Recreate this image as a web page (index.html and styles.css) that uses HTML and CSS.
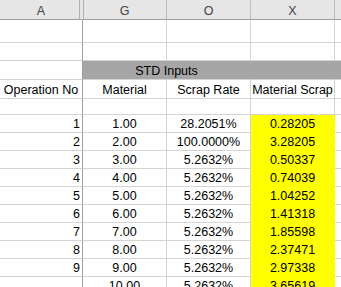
FILE: index.html
```html
<!DOCTYPE html>
<html>
<head>
<meta charset="utf-8">
<link rel="stylesheet" href="styles.css">
</head>
<body>
<div class="sheet">
  <div class="c h ha">A</div>
  <div class="c h hg">G</div>
  <div class="c h">O</div>
  <div class="c h">X</div>
  <div class="c h hl"></div>

  <div class="c a"></div><div class="c"></div><div class="c"></div><div class="c"></div><div class="c l"></div>
  <div class="c a"></div><div class="c"></div><div class="c"></div><div class="c"></div><div class="c l"></div>

  <div class="c a"></div>
  <div class="c g span2">STD Inputs</div>
  <div class="c g"></div>
  <div class="c g l"></div>

  <div class="c a ac">Operation No</div><div class="c">Material</div><div class="c">Scrap Rate</div><div class="c">Material Scrap</div><div class="c l"></div>

  <div class="c a"></div><div class="c"></div><div class="c"></div><div class="c"></div><div class="c l"></div>

  <div class="c a">1</div><div class="c">1.00</div><div class="c">28.2051%</div><div class="c y">0.28205</div><div class="c l"></div>
  <div class="c a">2</div><div class="c">2.00</div><div class="c">100.0000%</div><div class="c y">3.28205</div><div class="c l"></div>
  <div class="c a">3</div><div class="c">3.00</div><div class="c">5.2632%</div><div class="c y">0.50337</div><div class="c l"></div>
  <div class="c a">4</div><div class="c">4.00</div><div class="c">5.2632%</div><div class="c y">0.74039</div><div class="c l"></div>
  <div class="c a">5</div><div class="c">5.00</div><div class="c">5.2632%</div><div class="c y">1.04252</div><div class="c l"></div>
  <div class="c a">6</div><div class="c">6.00</div><div class="c">5.2632%</div><div class="c y">1.41318</div><div class="c l"></div>
  <div class="c a">7</div><div class="c">7.00</div><div class="c">5.2632%</div><div class="c y">1.85598</div><div class="c l"></div>
  <div class="c a">8</div><div class="c">8.00</div><div class="c">5.2632%</div><div class="c y">2.37471</div><div class="c l"></div>
  <div class="c a">9</div><div class="c">9.00</div><div class="c">5.2632%</div><div class="c y">2.97338</div><div class="c l"></div>
  <div class="c a"></div><div class="c">10.00</div><div class="c">5.2632%</div><div class="c y">3.65619</div><div class="c l"></div>
</div>
</body>
</html>
```

FILE: styles.css
```css
html, body {
  margin: 0;
  padding: 0;
  background: #ffffff;
  overflow: hidden;
}

.sheet {
  display: grid;
  grid-template-columns: 83px 84px 84px 84px 1fr;
  grid-template-rows: 20px 23px 18px 19px 19px 16px repeat(10, 18px);
  width: 341px;
}

.c {
  box-sizing: border-box;
  border-right: 1px solid #d4d4d4;
  border-bottom: 1px solid #d4d4d4;
  display: flex;
  align-items: center;
  justify-content: center;
  font-family: "Liberation Sans", Arial, sans-serif;
  font-size: 12.5px;
  color: #000000;
  white-space: nowrap;
  overflow: hidden;
  padding-top: 1px;
}

.a {
  border-right-color: #9e9e9e;
  justify-content: flex-end;
  padding-right: 2px;
}

.a.ac {
  justify-content: center;
  padding-right: 0;
}

.l {
  border-right: none;
}

.h {
  background: #e6e6e6;
  color: #444444;
  border-bottom-color: #9e9e9e;
  border-right-color: #bdbdbd;
  padding-top: 2px;
}

.ha {
  border-right-color: #e6e6e6;
  box-shadow: inset -2px 0 0 #e6e6e6, inset -3px 0 0 #b0b0b0;
}

.hg {
  box-shadow: inset 1px 0 0 #b0b0b0;
}

.hl {
  border-right: none;
}

.g {
  background: #a6a6a6;
  border-right-color: #a6a6a6;
}

.span2 {
  grid-column: span 2;
}

.y {
  background: #ffff00;
  border-right-color: #ffff00;
  border-bottom-color: #ffff00;
}
```
